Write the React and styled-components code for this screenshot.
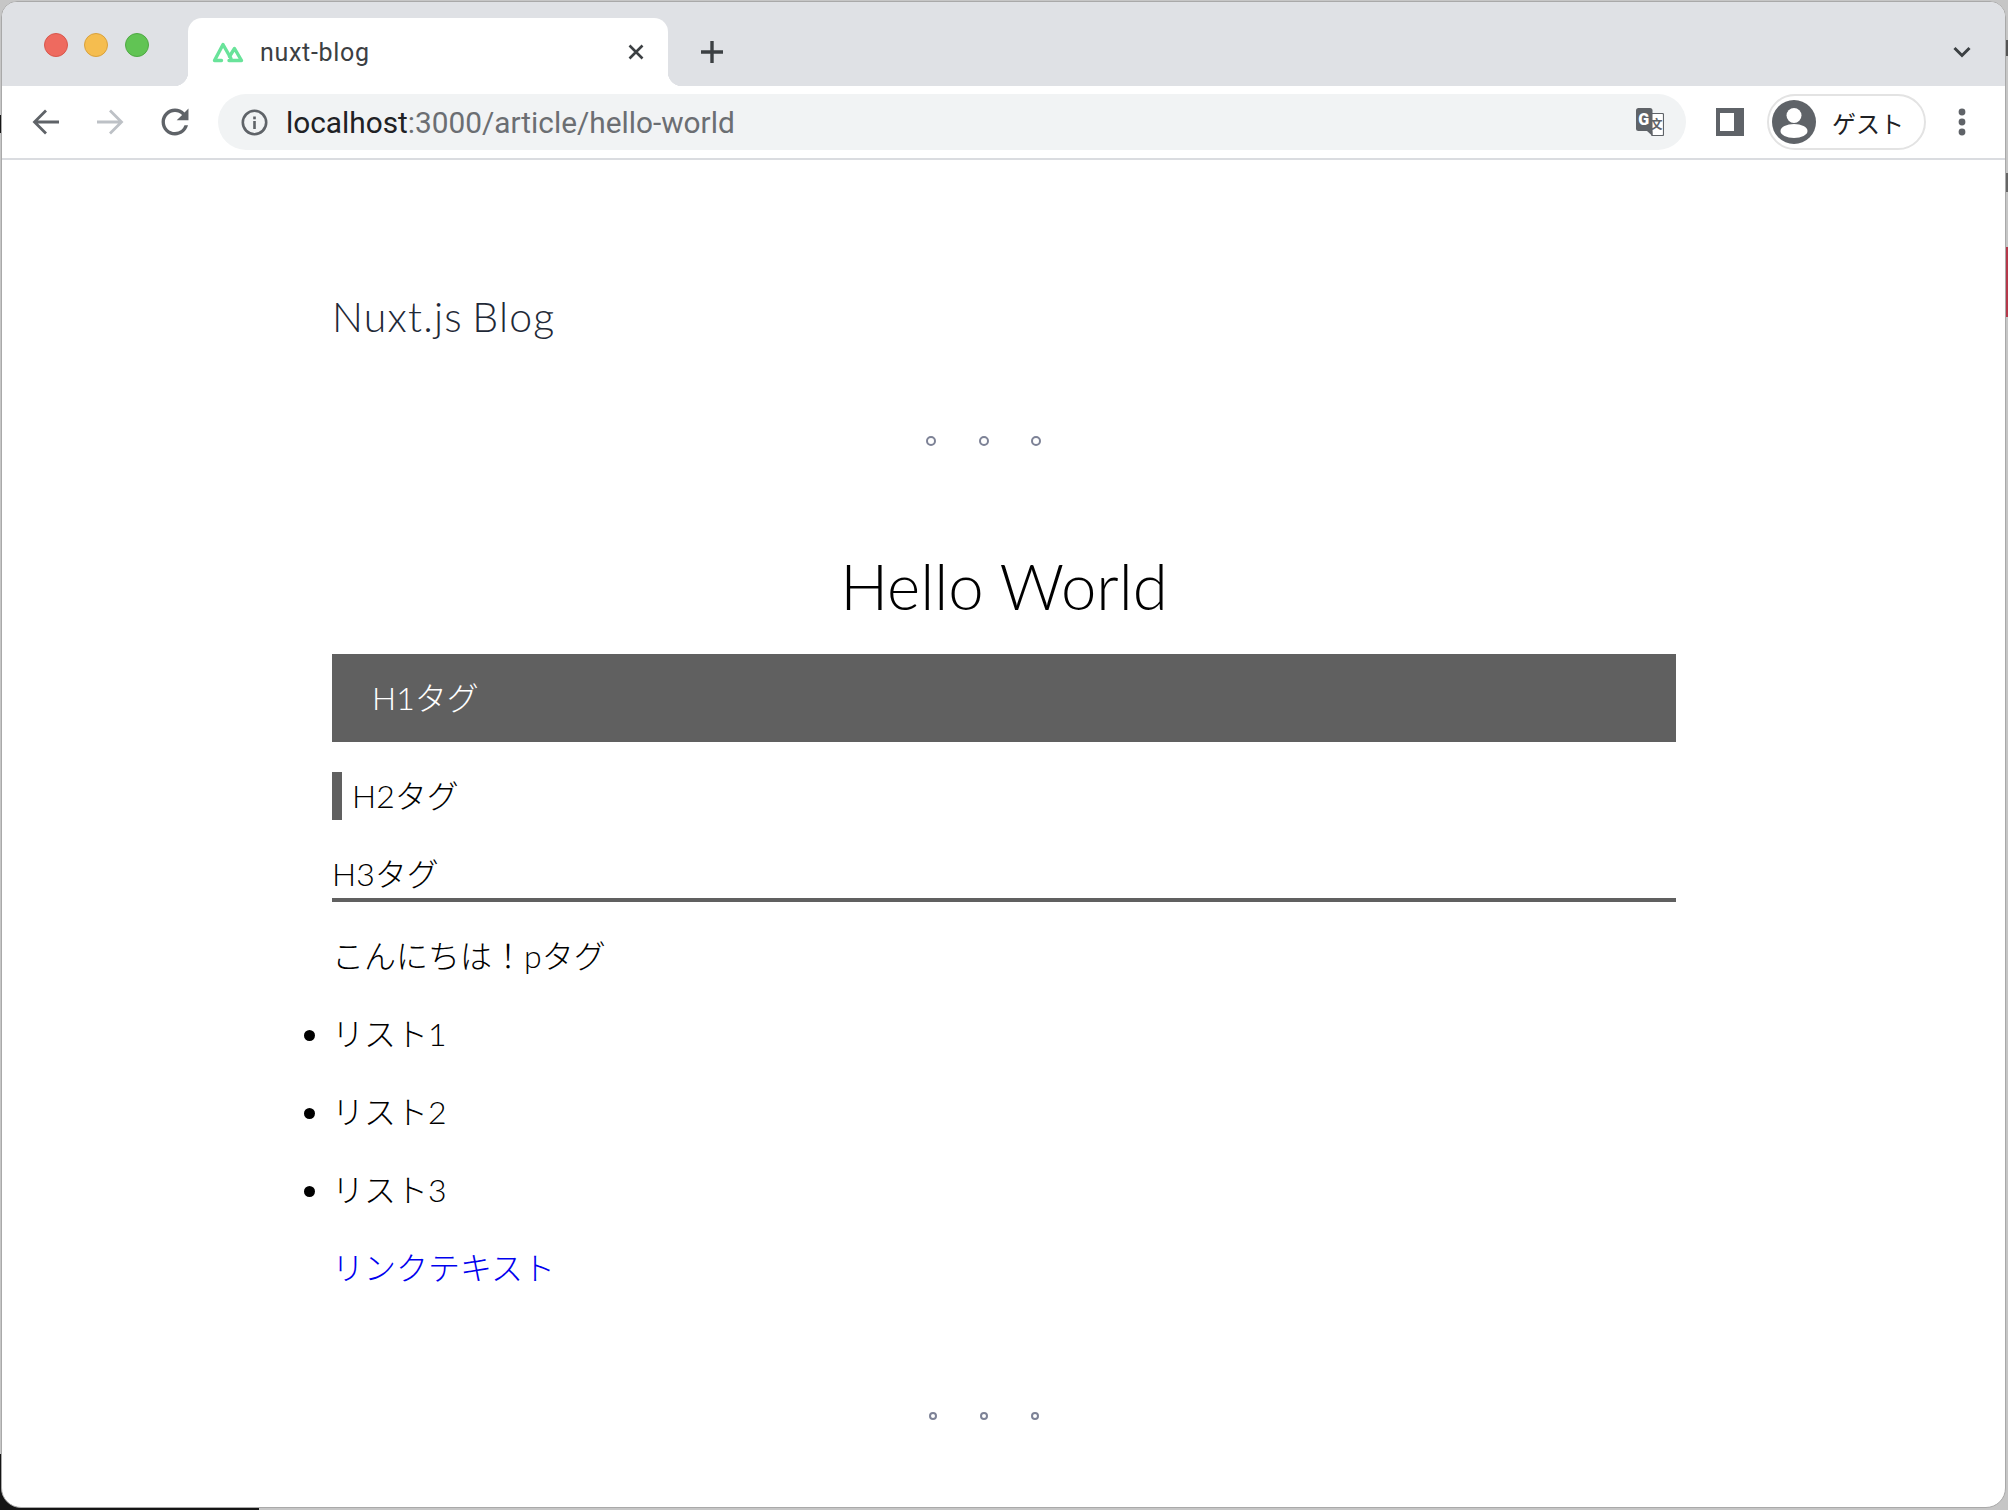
import React from 'react';
import styled, { createGlobalStyle } from 'styled-components';

const GlobalStyle = createGlobalStyle`
    html, body {
        margin: 0;
        padding: 0;
    }
    body {
        font-family: "Lato", "Noto Sans CJK JP", sans-serif;
        font-weight: 300;
    }
`;

const Desktop = styled.div`
    box-sizing: border-box;
    width: 2008px;
    height: 1510px;
    overflow: hidden;
    padding: 1px 2px 2px 1px;
    background:
        linear-gradient(#151515, #151515) 0 1454px / 259px 56px no-repeat,
        linear-gradient(#151515, #151515) 0 115px / 2px 18px no-repeat,
        linear-gradient(#555, #555) 2006px 40px / 2px 16px no-repeat,
        linear-gradient(#666, #666) 2006px 173px / 2px 19px no-repeat,
        linear-gradient(#b5384a, #b5384a) 2006px 247px / 2px 70px no-repeat,
        #c6c6c6;
`;

const Window = styled.div`
    box-sizing: border-box;
    height: 100%;
    display: flex;
    flex-direction: column;
    background: #fff;
    border: 1px solid #a9a9a9;
    border-radius: 16px 16px 20px 20px;
    overflow: hidden;
`;

const TabStrip = styled.div`
    height: 84px;
    flex-shrink: 0;
    display: flex;
    align-items: flex-end;
    padding-left: 42px;
    background: #dfe1e5;
`;

const Lights = styled.div`
    display: flex;
    gap: 16.4px;
    align-self: flex-start;
    margin-top: 31px;
    width: 144px;
`;

const Light = styled.span`
    width: 24px;
    height: 24px;
    box-sizing: border-box;
    border-radius: 50%;
    background: ${props => props.$color};
    border: 1px solid ${props => props.$edge};
`;

const Tab = styled.div`
    position: relative;
    box-sizing: border-box;
    width: 480px;
    height: 68px;
    display: flex;
    align-items: center;
    padding: 0 24px;
    background: #fff;
    border-radius: 14px 14px 0 0;

    &::before, &::after {
        content: "";
        position: absolute;
        bottom: 0;
        width: 14px;
        height: 14px;
    }
    &::before {
        left: -14px;
        background: radial-gradient(circle at 0 0, #dfe1e5 14px, #fff 14.5px);
    }
    &::after {
        right: -14px;
        background: radial-gradient(circle at 100% 0, #dfe1e5 14px, #fff 14.5px);
    }
`;

const TabTitle = styled.span`
    flex: 1;
    margin-left: 16px;
    font-family: "Roboto", sans-serif;
    font-weight: 400;
    font-size: 25px;
    letter-spacing: 0.7px;
    color: #3c4043;
`;

const NewTab = styled.svg`
    margin-left: 32px;
    align-self: flex-end;
    margin-bottom: 22px;
`;

const StripEnd = styled.svg`
    margin-left: auto;
    margin-right: 34px;
    margin-bottom: 28px;
`;

const Toolbar = styled.div`
    height: 72px;
    flex-shrink: 0;
    display: flex;
    align-items: center;
    padding-left: 30px;
    background: #fff;
    border-bottom: 2px solid #dadce0;
`;

const NavButton = styled.svg`
    margin-right: ${props => props.$gap || 0}px;
`;

const Omnibox = styled.div`
    box-sizing: border-box;
    width: 1468px;
    height: 56px;
    margin-left: 27px;
    display: flex;
    align-items: center;
    padding: 0 22px 0 23px;
    background: #f1f3f4;
    border-radius: 28px;
`;

const Url = styled.div`
    flex: 1;
    margin-left: 18px;
    font-family: "Roboto", sans-serif;
    font-weight: 400;
    font-size: 29.8px;
    color: #6b6e72;
`;

const Host = styled.span`
    color: #202124;
`;

const PanelIcon = styled.svg`
    margin-left: 30px;
`;

const Profile = styled.div`
    box-sizing: border-box;
    width: 159px;
    height: 56px;
    margin-left: 23px;
    display: flex;
    align-items: center;
    padding-left: 3px;
    border: 2px solid #e3e3e3;
    border-radius: 28px;
`;

const ProfileName = styled.span`
    margin-left: 16px;
    font-family: "Noto Sans CJK JP", sans-serif;
    font-weight: 400;
    font-size: 24px;
    color: #202124;
`;

const MoreDots = styled.svg`
    margin-left: 32px;
`;

const Page = styled.main`
    flex: 1;
    padding: 0 329px 0 330px;
`;

const SiteTitle = styled.div`
    margin-top: 132px;
    font-size: 41px;
    line-height: 50px;
    letter-spacing: 1.2px;
    word-spacing: -3px;
    color: #1f2937;
`;

const Ornament = styled.div`
    display: flex;
    justify-content: center;
    gap: ${props => props.$gap}px;
    margin-top: ${props => props.$top}px;
    padding-right: 41px;
`;

const Ring = styled.span`
    box-sizing: border-box;
    width: ${props => props.$size}px;
    height: ${props => props.$size}px;
    border: 2px solid #7d8296;
    border-radius: 50%;
`;

const ArticleTitle = styled.h1`
    margin: 103px 0 0;
    text-align: center;
    font-size: 63.5px;
    line-height: 74px;
    font-weight: 300;
    color: #000;
`;

const Heading1 = styled.h2`
    margin: 31px 0 30px;
    padding: 20px 40px;
    background: #606060;
    color: #fff;
    font-size: 32px;
    line-height: 48px;
    font-weight: 300;
`;

const Heading2 = styled.h3`
    margin: 30px 0;
    padding-left: 10px;
    border-left: 10px solid #606060;
    color: #000;
    font-size: 32px;
    line-height: 48px;
    font-weight: 300;
`;

const Heading3 = styled.h4`
    margin: 30px 0;
    border-bottom: 4px solid #606060;
    color: #000;
    font-size: 32px;
    line-height: 48px;
    font-weight: 300;
`;

const Paragraph = styled.p`
    margin: 30px 0;
    color: #000;
    font-size: 32px;
    line-height: 48px;
`;

const List = styled.ul`
    margin: 30px 0;
    padding: 0;
    color: #000;
    font-size: 32px;
    line-height: 48px;
`;

const ListItem = styled.li`
    margin-bottom: 30px;
`;

const TextLink = styled.a`
    color: #0000ee;
    text-decoration: none;
`;

const NuxtIcon = () => (
    <svg width="32" height="22" viewBox="0 0 32 22" fill="none" stroke="#69e39a" strokeWidth="3.4" strokeLinejoin="round" strokeLinecap="round">
        <path d="M9.5 19.5H2.5L11 3.5l8 14" />
        <path d="M17 19.5h12.5L22.5 7.5 17.5 15.5" />
    </svg>
);

const CloseIcon = () => (
    <svg width="16" height="16" viewBox="0 0 16 16" stroke="#3c4043" strokeWidth="2.6">
        <path d="M1.5 1.5l13 13M14.5 1.5l-13 13" />
    </svg>
);

const InfoIcon = () => (
    <svg width="27" height="27" viewBox="0 0 27 27" fill="none">
        <circle cx="13.5" cy="13.5" r="11.7" stroke="#5f6368" strokeWidth="2.6" />
        <rect x="12.2" y="12" width="2.6" height="8" fill="#5f6368" />
        <rect x="12.2" y="7.5" width="2.6" height="2.8" fill="#5f6368" />
    </svg>
);

const TranslateIcon = () => (
    <svg width="28" height="28" viewBox="0 0 28 28">
        <path d="M14 5.5h12.5a1 1 0 0 1 1 1v20a1 1 0 0 1-1 1H16z" fill="#fff" stroke="#5f6368" strokeWidth="1.2" />
        <rect x="0" y="0" width="16.5" height="23" rx="2.5" fill="#5f6368" />
        <path d="M11 23l5.5 5v-6z" fill="#5f6368" />
        <text x="2.2" y="16.5" fill="#fff" fontFamily="Roboto" fontWeight="900" fontSize="16">G</text>
        <text x="14.5" y="20.5" fill="#5f6368" fontFamily="Noto Sans CJK SC" fontWeight="700" fontSize="12">文</text>
    </svg>
);

const AvatarIcon = () => (
    <svg width="44" height="44" viewBox="0 0 44 44">
        <circle cx="22" cy="22" r="22" fill="#5f6368" />
        <circle cx="22" cy="15.5" r="7.5" fill="#fff" />
        <ellipse cx="22" cy="31" rx="13.5" ry="7" fill="#fff" />
    </svg>
);

const App = () => (
    <>
        <GlobalStyle />
        <Desktop>
            <Window>
                <TabStrip>
                    <Lights>
                        <Light $color="#ee6a5f" $edge="#d8574c" />
                        <Light $color="#f5bd4f" $edge="#d9a13c" />
                        <Light $color="#61c454" $edge="#4fa944" />
                    </Lights>
                    <Tab>
                        <NuxtIcon />
                        <TabTitle>nuxt-blog</TabTitle>
                        <CloseIcon />
                    </Tab>
                    <NewTab width="24" height="24" viewBox="0 0 24 24" stroke="#3c4043" strokeWidth="3.4">
                        <path d="M12 1v22M1 12h22" />
                    </NewTab>
                    <StripEnd width="18" height="12" viewBox="0 0 18 12" fill="none" stroke="#3c4043" strokeWidth="3">
                        <path d="M1.5 2l7.5 7.5L16.5 2" />
                    </StripEnd>
                </TabStrip>
                <Toolbar>
                    <NavButton $gap={36} width="28" height="26" viewBox="0 0 28 26" fill="none" stroke="#5f6368" strokeWidth="2.8">
                        <path d="M27 13H3M14 1.5L2.5 13 14 24.5" />
                    </NavButton>
                    <NavButton $gap={35} width="28" height="26" viewBox="0 0 28 26" fill="none" stroke="#bdc1c6" strokeWidth="2.8">
                        <path d="M1 13h24M14 1.5L25.5 13 14 24.5" />
                    </NavButton>
                    <NavButton width="32" height="32" viewBox="2.5 2.5 19 19" fill="#5f6368">
                        <path d="M17.65 6.35A7.958 7.958 0 0 0 12 4c-4.42 0-7.99 3.58-7.99 8s3.57 8 7.99 8c3.73 0 6.84-2.55 7.73-6h-2.08A5.99 5.99 0 0 1 12 18c-3.31 0-6-2.69-6-6s2.69-6 6-6c1.66 0 3.14.69 4.22 1.78L13 11h7V4l-2.35 2.35z" />
                    </NavButton>
                    <Omnibox>
                        <InfoIcon />
                        <Url><Host>localhost</Host>:3000/article/hello-world</Url>
                        <TranslateIcon />
                    </Omnibox>
                    <PanelIcon width="28" height="28" viewBox="0 0 28 28">
                        <path fillRule="evenodd" d="M0 0h28v28H0zM4 5v18h14V5z" fill="#5f6368" />
                    </PanelIcon>
                    <Profile>
                        <AvatarIcon />
                        <ProfileName>ゲスト</ProfileName>
                    </Profile>
                    <MoreDots width="8" height="28" viewBox="0 0 8 28" fill="#5f6368">
                        <circle cx="4" cy="4" r="3.4" />
                        <circle cx="4" cy="14" r="3.4" />
                        <circle cx="4" cy="24" r="3.4" />
                    </MoreDots>
                </Toolbar>
                <Page>
                    <SiteTitle>Nuxt.js Blog</SiteTitle>
                    <Ornament $gap={42.5} $top={94}>
                        <Ring $size={10} /><Ring $size={10} /><Ring $size={10} />
                    </Ornament>
                    <ArticleTitle>Hello World</ArticleTitle>
                    <Heading1>H1タグ</Heading1>
                    <Heading2>H2タグ</Heading2>
                    <Heading3>H3タグ</Heading3>
                    <Paragraph>こんにちは！pタグ</Paragraph>
                    <List>
                        <ListItem>リスト1</ListItem>
                        <ListItem>リスト2</ListItem>
                        <ListItem>リスト3</ListItem>
                    </List>
                    <Paragraph><TextLink href="#">リンクテキスト</TextLink></Paragraph>
                    <Ornament $gap={43} $top={120}>
                        <Ring $size={8} /><Ring $size={8} /><Ring $size={8} />
                    </Ornament>
                </Page>
            </Window>
        </Desktop>
    </>
);

export default App;
